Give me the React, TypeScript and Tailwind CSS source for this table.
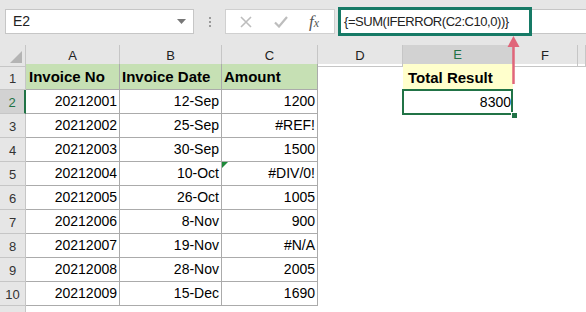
import React from "react";

const rows = [
  ["20212001", "12-Sep", "1200"],
  ["20212002", "25-Sep", "#REF!"],
  ["20212003", "30-Sep", "1500"],
  ["20212004", "10-Oct", "#DIV/0!"],
  ["20212005", "26-Oct", "1005"],
  ["20212006", "8-Nov", "900"],
  ["20212007", "19-Nov", "#N/A"],
  ["20212008", "28-Nov", "2005"],
  ["20212009", "15-Dec", "1690"],
];

const gridCols = "grid grid-cols-[26px_94px_102px_96px_85px_110px_65px_1fr]";

const FormulaBar = () => (
  <div className="relative h-[45px] bg-[#e6e6e6] flex items-start pt-[9px]">
    <div className="ml-[5px] w-[189px] h-[25px] bg-white border border-[#c6c6c6] flex items-center justify-between px-[7px] text-[14px] text-[#222]">
      <span>E2</span>
      <svg width="9" height="5" viewBox="0 0 9 5">
        <path d="M0 0h9L4.5 5z" fill="#777" />
      </svg>
    </div>
    <div className="w-[31px] h-[25px] flex flex-col items-center justify-center gap-[2px]">
      <span className="w-[2px] h-[2px] bg-[#9a9a9a]" />
      <span className="w-[2px] h-[2px] bg-[#9a9a9a]" />
      <span className="w-[2px] h-[2px] bg-[#9a9a9a]" />
    </div>
    <div className="w-[110px] h-[25px] bg-white border border-[#d0d0d0] flex items-center">
      <svg className="ml-[14px]" width="12" height="12" viewBox="0 0 12 12">
        <path d="M1 1l10 10M11 1l-10 10" stroke="#bdbdbd" strokeWidth="1.6" />
      </svg>
      <svg className="ml-[22px]" width="14" height="12" viewBox="0 0 14 12">
        <path d="M1 6.5l4 4 8-9.5" stroke="#bdbdbd" strokeWidth="2.2" fill="none" />
      </svg>
      <span className="ml-[21px] italic text-[17px] leading-none text-[#555] font-['Liberation_Serif',serif]">
        f<span className="text-[12px]">x</span>
      </span>
    </div>
    <div className="ml-[3px] flex-1 h-[25px] bg-white border-y border-[#c6c6c6]" />
    <div className="absolute left-[338px] top-[7px] w-[194px] h-[29px] border-[3px] border-[#167a66] flex items-center pl-[3px] text-[13px] tracking-[-0.45px] text-[#222] bg-white">
      {"{=SUM(IFERROR(C2:C10,0))}"}
    </div>
  </div>
);

const HeaderRow = () => {
  const letters = ["A", "B", "C", "D", "E", "F", ""];
  return (
    <div className={`${gridCols} h-[19px] bg-[#e6e6e6] text-[13px] text-[#222]`}>
      <div className="relative border-r border-b border-[#c6c6c6]">
        <svg className="absolute right-[3px] bottom-[3px]" width="12" height="12" viewBox="0 0 12 12">
          <path d="M12 0V12H0z" fill="#b4b4b4" />
        </svg>
      </div>
      {letters.map((l, i) =>
        l === "E" ? (
          <div key={i} className="bg-[#d2d2d2] border-r border-[#c6c6c6] border-b-2 border-b-[#217346] text-[#217346] flex items-center justify-center">
            {l}
          </div>
        ) : (
          <div key={i} className="border-r border-b border-[#c6c6c6] flex items-center justify-center">
            {l}
          </div>
        )
      )}
    </div>
  );
};

const RowHead = ({ n, active }: { n: number; active?: boolean }) => (
  <div
    className={
      active
        ? "bg-[#d2d2d2] border-r-2 border-r-[#217346] border-b border-b-[#c6c6c6] text-[#217346] flex items-end justify-center pb-[1px] text-[13px] font-normal"
        : "bg-[#e6e6e6] border-r border-b border-[#c6c6c6] text-[#333] flex items-end justify-center pb-[1px] text-[13px] font-normal"
    }
  >
    {n}
  </div>
);

const Cell = ({ v, corner }: { v: string; corner?: boolean }) => (
  <div className="relative border-r border-b border-[#ababab] flex items-end justify-end pr-[2px] pb-[1px]">
    {corner && (
      <svg className="absolute left-0 top-0" width="6" height="6" viewBox="0 0 6 6">
        <path d="M0 0h6L0 6z" fill="#1e8a3a" />
      </svg>
    )}
    {v}
  </div>
);

export default function App() {
  return (
    <div className="relative w-[586px] h-[312px] overflow-hidden bg-white font-['Liberation_Sans',Arial,sans-serif] text-black">
      <FormulaBar />
      <HeaderRow />
      <div className={`${gridCols} h-[26px] text-[15px] font-bold`}>
        <RowHead n={1} />
        <div className="bg-[#c6e0b4] border-r border-b border-[#ababab] flex items-end pl-[3px] pb-[1px]">Invoice No</div>
        <div className="bg-[#c6e0b4] border-r border-b border-[#ababab] flex items-end pl-[2px] pb-[1px]">Invoice Date</div>
        <div className="bg-[#c6e0b4] border-r border-b border-[#ababab] flex items-end pl-[2px] pb-[1px]">Amount</div>
        <div />
        <div className="bg-[#ffffcc] flex items-end pl-[5px] pb-[1px]">Total Result</div>
        <div />
        <div />
      </div>
      {rows.map((r, i) => (
        <div key={i} className={`${gridCols} h-[24px] text-[14px]`}>
          <RowHead n={i + 2} active={i === 0} />
          <Cell v={r[0]} />
          <Cell v={r[1]} />
          <Cell v={r[2]} corner={i === 3} />
          <div />
          {i === 0 ? (
            <div className="relative flex items-end justify-end pr-[2px] pb-[1px]">
              8300
              <div className="absolute -left-[1px] -top-[1px] w-[111px] h-[26px] border-2 border-[#217346]" />
              <div className="absolute -right-[5px] -bottom-[5px] w-[7px] h-[7px] bg-[#217346] border border-white" />
            </div>
          ) : (
            <div />
          )}
          <div />
          <div />
        </div>
      ))}
      <div className={`${gridCols} h-[24px]`}>
        <div className="bg-[#e6e6e6] border-r border-[#c6c6c6]" />
      </div>
      <svg className="absolute left-[507px] top-[36px]" width="13" height="48" viewBox="0 0 13 48">
        <path d="M6.5 6V48" stroke="#e0667a" strokeWidth="2.5" />
        <path d="M6.5 0L12.5 11H0.5z" fill="#e0667a" />
      </svg>
    </div>
  );
}
